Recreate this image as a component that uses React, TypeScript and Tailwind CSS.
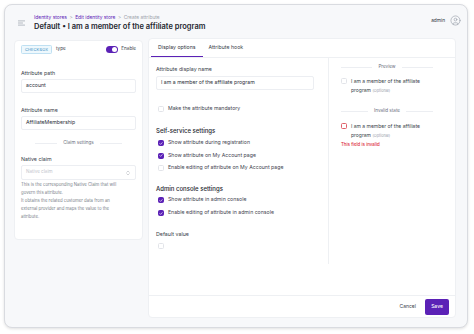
import React from 'react'
import { ChevronsUpDown, CircleUser } from 'lucide-react'

const purple = 'bg-[#5b21b6]'

const Check = ({ checked = false, invalid = false }: { checked?: boolean; invalid?: boolean }) => (
  <span
    className={`flex h-[6px] w-[6px] shrink-0 items-center justify-center rounded-[1.5px] border ${
      checked
        ? 'border-[#5b21b6] bg-[#5b21b6]'
        : invalid
          ? 'border-[#e0606a] bg-white'
          : 'border-[#e2e4e9] bg-white'
    }`}
  >
    {checked && (
      <svg viewBox="0 0 10 10" className="h-[5px] w-[5px]">
        <path d="M2 5.2l2 2 4-4.4" fill="none" stroke="white" strokeWidth="1.6" strokeLinecap="round" strokeLinejoin="round" />
      </svg>
    )}
  </span>
)

const CheckRow = ({ label, checked }: { label: string; checked?: boolean }) => (
  <div className="flex h-[8px] items-center gap-[4px] pl-[2px]">
    <Check checked={checked} />
    <span className="text-[5.2px] text-[#3f4450]">{label}</span>
  </div>
)

const Divider = ({ label }: { label: string }) => (
  <div className="flex h-[8px] items-center gap-[6px]">
    <div className="h-px flex-1 bg-[#eceef2]" />
    <span className="text-[4.6px] text-[#6b7080]">{label}</span>
    <div className="h-px flex-1 bg-[#eceef2]" />
  </div>
)

const Label = ({ children }: { children: React.ReactNode }) => (
  <div className="text-[5.3px] leading-[8px] text-[#3a3f4b]">{children}</div>
)

const Input = ({ value }: { value: string }) => (
  <div className="flex h-[14px] items-center rounded-[2px] border border-[#eceef2] bg-white px-[4px] text-[5.2px] text-[#2d313b]">
    {value}
  </div>
)

const PreviewItem = ({ invalid }: { invalid?: boolean }) => (
  <div className="flex gap-[4px] pl-[12px]">
    <div className="pt-[1px]">
      <Check invalid={invalid} />
    </div>
    <div className="text-[5px] leading-[9px] text-[#3a3f4b]">
      I am a member of the affiliate
      <br />
      program <span className="text-[3.8px] text-[#9ca0ab]">(Optional)</span>
    </div>
  </div>
)

export default function App() {
  return (
    <div className="h-[334px] w-[474px] bg-white p-[4px]" style={{ fontFamily: 'Inter, "Noto Sans", sans-serif' }}>
      <div className="flex h-[324px] w-[464px] flex-col rounded-[8px] border border-[#d9dbe0] bg-[#f7f8fa] shadow-[0_1px_3px_rgba(0,0,0,0.12)]">
        {/* header */}
        <div className="flex h-[35px] items-center pl-[13px] pr-[6px]">
          <svg viewBox="0 0 10 8" className="h-[6px] w-[7px]">
            <path d="M0.5 1h9M0.5 4h6M0.5 7h9" stroke="#9aa0ab" strokeWidth="1" strokeLinecap="round" />
          </svg>
          <div className="ml-[9px] flex flex-col">
            <div className="flex items-center gap-[2.5px] text-[4.9px] leading-[8px]">
              <span className="text-[#5b21b6]">Identity stores</span>
              <span className="text-[#a0a4ad]">&gt;</span>
              <span className="text-[#5b21b6]">Edit identity store</span>
              <span className="text-[#a0a4ad]">&gt;</span>
              <span className="text-[#a0a4ad]">Create attribute</span>
            </div>
            <div className="text-[7.5px] font-semibold leading-[11px] text-[#23262e]">
              Default • I am a member of the affiliate program
            </div>
          </div>
          <div className="ml-auto flex items-center gap-[5px] pb-[4px]">
            <span className="text-[4.8px] text-[#2f333c]">admin</span>
            <CircleUser className="h-[11px] w-[11px] text-[#9aa0ab]" strokeWidth={1.4} />
          </div>
        </div>

        {/* body */}
        <div className="flex items-start gap-[5px] pl-[9px]">
          {/* left card */}
          <div className="h-[200px] w-[129px] rounded-[4px] border border-[#eef0f3] bg-white px-[6px] pt-[4px]">
            <div className="flex h-[9px] items-center">
              <span className="rounded-[1.5px] border border-[#bfe0f2] bg-[#eef8fd] px-[3px] text-[4px] leading-[7px] tracking-wide text-[#3b8fc4]">
                CHECKBOX
              </span>
              <span className="ml-[4px] text-[4.6px] text-[#3a3f4b]">type</span>
              <div className="ml-auto flex items-center gap-[3px]">
                <div className={`flex h-[7px] w-[12px] items-center justify-end rounded-full ${purple} px-[1px]`}>
                  <div className="h-[5px] w-[5px] rounded-full bg-white" />
                </div>
                <span className="text-[4.6px] text-[#3a3f4b]">Enable</span>
              </div>
            </div>
            <div className="mt-[15px]">
              <Label>Attribute path</Label>
            </div>
            <div className="mt-[2px]">
              <Input value="account" />
            </div>
            <div className="mt-[13px]">
              <Label>Attribute name</Label>
            </div>
            <div className="mt-[2px]">
              <Input value="AffiliateMembership" />
            </div>
            <div className="mt-[9px] px-[14px]">
              <Divider label="Claim settings" />
            </div>
            <div className="mt-[8px]">
              <Label>Native claim</Label>
            </div>
            <div className="mt-[2px] flex h-[15px] items-center rounded-[2px] border border-[#eceef2] bg-white px-[4px] text-[4.6px] text-[#c3c6cd]">
              Native claim
              <ChevronsUpDown className="ml-auto h-[6px] w-[6px] text-[#8a8f9a]" strokeWidth={1.6} />
            </div>
            <div className="mt-[1px] text-[4.3px] leading-[8px] text-[#7a7f8a]">
              This is the corresponding Native Claim that will
              <br />
              govern this attribute.
              <br />
              It obtains the related customer data from an
              <br />
              external provider and maps the value to the
              <br />
              attribute.
            </div>
          </div>

          {/* right panel */}
          <div className="mt-[-2px] flex h-[280px] w-[308px] flex-col rounded-[4px] border border-[#eef0f3] bg-white">
            <div className="flex h-[19px] border-b border-[#eef0f3] px-[2px]">
              <div className="flex items-center border-b border-[#5b21b6] px-[7px] text-[5.2px] text-[#2f333c]">
                Display options
              </div>
              <div className="flex items-center px-[6px] text-[5.2px] text-[#3a3f4b]">Attribute hook</div>
            </div>
            <div className="flex h-[206px]">
              <div className="w-[179px] pl-[7px] pr-[14px] pt-[7px]">
                <Label>Attribute display name</Label>
                <div className="mt-[3px]">
                  <Input value="I am a member of the affiliate program" />
                </div>
                <div className="mt-[15px]">
                  <CheckRow label="Make the attribute mandatory" />
                </div>
                <div className="mt-[14px] text-[6px] font-medium leading-[8px] text-[#23262e]">
                  Self-service settings
                </div>
                <div className="mt-[4px] flex flex-col gap-[4.5px]">
                  <CheckRow checked label="Show attribute during registration" />
                  <CheckRow checked label="Show attribute on My Account page" />
                  <CheckRow label="Enable editing of attribute on My Account page" />
                </div>
                <div className="mt-[13px] text-[6px] font-medium leading-[8px] text-[#23262e]">
                  Admin console settings
                </div>
                <div className="mt-[3px] flex flex-col gap-[5px]">
                  <CheckRow checked label="Show attribute in admin console" />
                  <CheckRow checked label="Enable editing of attribute in admin console" />
                </div>
                <div className="mt-[13px]">
                  <Label>Default value</Label>
                </div>
                <div className="mt-[5px] pl-[2px]">
                  <Check />
                </div>
              </div>
              <div className="flex-1 border-l border-[#eef0f3] pr-[10px] pt-[5px]">
                <div className="px-[12px]">
                  <Divider label="Preview" />
                </div>
                <div className="mt-[6px]">
                  <PreviewItem />
                </div>
                <div className="mt-[12px] px-[12px]">
                  <Divider label="Invalid state" />
                </div>
                <div className="mt-[7px]">
                  <PreviewItem invalid />
                </div>
                <div className="mt-[1px] pl-[12px] text-[4.4px] font-medium leading-[8px] text-[#dc2b3c]">
                  This field is invalid
                </div>
              </div>
            </div>
            <div className="mt-[31px] flex flex-1 items-center justify-end gap-[9px] border-t border-[#eef0f3] pr-[6px]">
              <span className="text-[5px] text-[#3a3f4b]">Cancel</span>
              <div className={`flex h-[16px] w-[24px] items-center justify-center rounded-[2px] ${purple} text-[5px] font-medium text-white`}>
                Save
              </div>
            </div>
          </div>
        </div>
      </div>
    </div>
  )
}
